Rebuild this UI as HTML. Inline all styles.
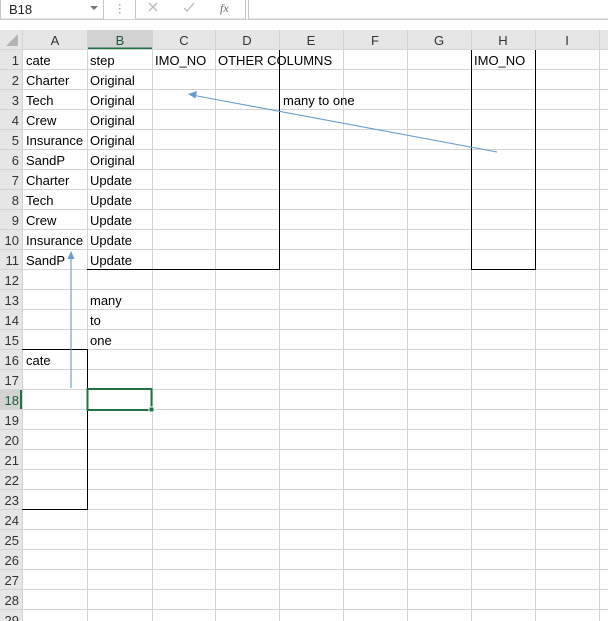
<!DOCTYPE html>
<html><head><meta charset="utf-8"><style>
html,body{margin:0;padding:0;background:#fff;width:608px;height:621px;overflow:hidden}
svg{display:block;font-family:"Liberation Sans",sans-serif}
</style></head><body>
<svg width="608" height="621" viewBox="0 0 608 621" xmlns="http://www.w3.org/2000/svg">
<rect width="608" height="621" fill="#fff"/>
<!-- formula bar -->
<rect x="0" y="0" width="608" height="20" fill="#fff"/>
<rect x="0.5" y="-1" width="103" height="20" fill="#fff" stroke="#c6c6c6"/>
<text x="9" y="14" font-size="13" fill="#222">B18</text>
<path d="M90 6 l4 4 l4 -4z" fill="#777"/>
<g fill="#aaa"><rect x="119" y="4" width="1.5" height="1.5"/><rect x="119" y="8" width="1.5" height="1.5"/><rect x="119" y="12" width="1.5" height="1.5"/></g>
<rect x="135.5" y="-1" width="110" height="20" fill="#fff" stroke="#c6c6c6"/>
<path d="M149 3 l8 8 M157 3 l-8 8" stroke="#bbb" stroke-width="1.3"/>
<path d="M184 8 l3 3 l7 -8" stroke="#bbb" stroke-width="1.3" fill="none"/>
<text x="220" y="12" font-size="12" font-style="italic" font-family="Liberation Serif" fill="#666">fx</text>
<rect x="248.5" y="-1" width="370" height="20" fill="#fff" stroke="#c6c6c6"/>
<!-- header band -->
<rect x="0" y="20" width="608" height="30" fill="#fff"/>
<rect x="0" y="30" width="608" height="20" fill="#e6e6e6"/>
<line x1="0" y1="19.5" x2="608" y2="19.5" stroke="#d0d0d0"/>
<rect x="87" y="30" width="65" height="20" fill="#d2d2d2"/>
<line x1="87" y1="48.5" x2="152" y2="48.5" stroke="#217346" stroke-width="2"/>
<!-- row header -->
<rect x="0" y="50" width="22" height="571" fill="#e6e6e6"/>
<rect x="0" y="390" width="22" height="20" fill="#d2d2d2"/>
<line x1="21" y1="390" x2="21" y2="410" stroke="#217346" stroke-width="2"/>
<path d="M6 46 L18 46 L18 34 Z" fill="#b4b4b4"/>
<!-- gridlines -->
<g stroke="#d4d4d4" stroke-width="1">
<line x1="22.5" y1="30" x2="22.5" y2="621"/>
<line x1="87.5" y1="30" x2="87.5" y2="621"/>
<line x1="152.5" y1="30" x2="152.5" y2="621"/>
<line x1="215.5" y1="30" x2="215.5" y2="621"/>
<line x1="279.5" y1="30" x2="279.5" y2="621"/>
<line x1="343.5" y1="30" x2="343.5" y2="621"/>
<line x1="407.5" y1="30" x2="407.5" y2="621"/>
<line x1="471.5" y1="30" x2="471.5" y2="621"/>
<line x1="535.5" y1="30" x2="535.5" y2="621"/>
<line x1="599.5" y1="30" x2="599.5" y2="621"/>
<line x1="0" y1="49.5" x2="608" y2="49.5"/>
<line x1="0" y1="69.5" x2="608" y2="69.5"/><line x1="0" y1="89.5" x2="608" y2="89.5"/>
<line x1="0" y1="109.5" x2="608" y2="109.5"/><line x1="0" y1="129.5" x2="608" y2="129.5"/>
<line x1="0" y1="149.5" x2="608" y2="149.5"/><line x1="0" y1="169.5" x2="608" y2="169.5"/>
<line x1="0" y1="189.5" x2="608" y2="189.5"/><line x1="0" y1="209.5" x2="608" y2="209.5"/>
<line x1="0" y1="229.5" x2="608" y2="229.5"/><line x1="0" y1="249.5" x2="608" y2="249.5"/>
<line x1="0" y1="269.5" x2="608" y2="269.5"/><line x1="0" y1="289.5" x2="608" y2="289.5"/>
<line x1="0" y1="309.5" x2="608" y2="309.5"/><line x1="0" y1="329.5" x2="608" y2="329.5"/>
<line x1="0" y1="349.5" x2="608" y2="349.5"/><line x1="0" y1="369.5" x2="608" y2="369.5"/>
<line x1="0" y1="389.5" x2="608" y2="389.5"/><line x1="0" y1="409.5" x2="608" y2="409.5"/>
<line x1="0" y1="429.5" x2="608" y2="429.5"/><line x1="0" y1="449.5" x2="608" y2="449.5"/>
<line x1="0" y1="469.5" x2="608" y2="469.5"/><line x1="0" y1="489.5" x2="608" y2="489.5"/>
<line x1="0" y1="509.5" x2="608" y2="509.5"/><line x1="0" y1="529.5" x2="608" y2="529.5"/>
<line x1="0" y1="549.5" x2="608" y2="549.5"/><line x1="0" y1="569.5" x2="608" y2="569.5"/>
<line x1="0" y1="589.5" x2="608" y2="589.5"/><line x1="0" y1="609.5" x2="608" y2="609.5"/>
</g>
<!-- column letters -->
<g font-size="13" fill="#333" text-anchor="middle">
<text x="55" y="45">A</text><text x="120" y="45" fill="#1e5a36">B</text><text x="184" y="45">C</text>
<text x="247" y="45">D</text><text x="311" y="45">E</text><text x="375" y="45">F</text>
<text x="439" y="45">G</text><text x="503" y="45">H</text><text x="567" y="45">I</text>
</g>
<!-- row numbers -->
<g font-size="13" fill="#333" text-anchor="end">
<text x="19" y="65">1</text><text x="19" y="85">2</text><text x="19" y="105">3</text><text x="19" y="125">4</text>
<text x="19" y="145">5</text><text x="19" y="165">6</text><text x="19" y="185">7</text><text x="19" y="205">8</text>
<text x="19" y="225">9</text><text x="19" y="245">10</text><text x="19" y="265">11</text><text x="19" y="285">12</text>
<text x="19" y="305">13</text><text x="19" y="325">14</text><text x="19" y="345">15</text><text x="19" y="365">16</text>
<text x="19" y="385">17</text><text x="19" y="405" fill="#1e5a36">18</text><text x="19" y="425">19</text><text x="19" y="445">20</text>
<text x="19" y="465">21</text><text x="19" y="485">22</text><text x="19" y="505">23</text><text x="19" y="525">24</text>
<text x="19" y="545">25</text><text x="19" y="565">26</text><text x="19" y="585">27</text><text x="19" y="605">28</text>
<text x="19" y="625">29</text>
</g>
<!-- cell text -->
<g font-size="13" fill="#000">
<text x="26" y="65">cate</text><text x="90" y="65">step</text><text x="155" y="65">IMO_NO</text><text x="218" y="65">OTHER COLUMNS</text><text x="474" y="65">IMO_NO</text>
<text x="26" y="85">Charter</text><text x="90" y="85">Original</text>
<text x="26" y="105">Tech</text><text x="90" y="105">Original</text><text x="283" y="105">many to one</text>
<text x="26" y="125">Crew</text><text x="90" y="125">Original</text>
<text x="26" y="145">Insurance</text><text x="90" y="145">Original</text>
<text x="26" y="165">SandP</text><text x="90" y="165">Original</text>
<text x="26" y="185">Charter</text><text x="90" y="185">Update</text>
<text x="26" y="205">Tech</text><text x="90" y="205">Update</text>
<text x="26" y="225">Crew</text><text x="90" y="225">Update</text>
<text x="26" y="245">Insurance</text><text x="90" y="245">Update</text>
<text x="26" y="265">SandP</text><text x="90" y="265">Update</text>
<text x="90" y="305">many</text><text x="90" y="325">to</text><text x="90" y="345">one</text>
<text x="26" y="365">cate</text>
</g>
<!-- borders -->
<g stroke="#000" stroke-width="1" fill="none">
<path d="M279.5 50 V269.5 H87"/>
<path d="M471.5 50 V269.5 H535.5 V50"/>
<path d="M22 349.5 H87.5 V509.5 H22"/>
</g>
<!-- arrows -->
<g stroke="#6a9ccf" stroke-width="1.1" fill="#6a9ccf">
<line x1="497" y1="152" x2="192" y2="95"/>
<path d="M188 94 L197 91 L195.5 98.5 Z" stroke="none"/>
<line x1="71" y1="388" x2="71" y2="257"/>
<path d="M71 251 L67.5 259 L74.5 259 Z" stroke="none"/>
</g>
<!-- selection -->
<rect x="87.5" y="389" width="64" height="21" fill="none" stroke="#217346" stroke-width="2"/>
<rect x="149" y="407" width="5" height="5" fill="#217346" stroke="#fff" stroke-width="1"/>
</svg>
</body></html>
